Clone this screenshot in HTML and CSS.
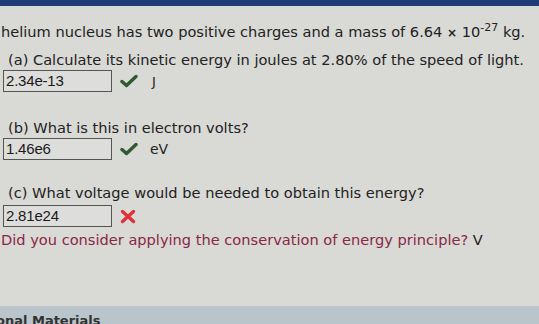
FILE: index.html
```html
<!DOCTYPE html>
<html>
<head>
<meta charset="utf-8">
<link rel="stylesheet" href="styles.css">
</head>
<body>
<div class="topbar"></div>
<div class="content">
  <p class="intro">helium nucleus has two positive charges and a mass of 6.64 <span class="times">×</span> 10<sup>-27</sup> kg.</p>
  <div class="part">
    <p class="q">(a) Calculate its kinetic energy in joules at 2.80% of the speed of light.</p>
    <div class="answer">
      <span class="box">2.34e-13</span>
      <svg class="mark" width="18" height="14" viewBox="0 0 18 14"><path d="M2 7.5 L6.5 11.5 L16 2.5" fill="none" stroke="#2f5a30" stroke-width="3.4" stroke-linecap="round" stroke-linejoin="round"/></svg>
      <span class="unit">J</span>
    </div>
  </div>
  <div class="part pb">
    <p class="q">(b) What is this in electron volts?</p>
    <div class="answer">
      <span class="box">1.46e6</span>
      <svg class="mark" width="18" height="14" viewBox="0 0 18 14"><path d="M2 7.5 L6.5 11.5 L16 2.5" fill="none" stroke="#2f5a30" stroke-width="3.4" stroke-linecap="round" stroke-linejoin="round"/></svg>
      <span class="unit ev">eV</span>
    </div>
  </div>
  <div class="part pc">
    <p class="q">(c) What voltage would be needed to obtain this energy?</p>
    <div class="answer ac">
      <span class="box">2.81e24</span>
      <svg class="mark x" width="16" height="15" viewBox="0 0 16 15"><path d="M2.5 2.5 L13.5 12.5 M13.5 2.5 L2.5 12.5" stroke="#e0303c" stroke-width="3.4" stroke-linecap="round"/></svg>
    </div>
    <p class="hint">Did you consider applying the conservation of energy principle? <span class="v">V</span></p>
  </div>
</div>
<div class="footer"><span>onal Materials</span></div>
</body>
</html>
```
FILE: styles.css
```css
html, body {
  margin: 0;
  padding: 0;
  width: 539px;
  height: 324px;
  overflow: hidden;
  background: #d9d9d6;
  font-family: "DejaVu Sans", Verdana, sans-serif;
  color: #222;
}
body {
  display: flex;
  flex-direction: column;
}
.topbar {
  height: 6px;
  background: #1f3c78;
}
.content {
  flex: 1;
  padding-left: 1px;
}
p { margin: 0; }
.intro {
  font-size: 14.6px;
  line-height: 18px;
  margin-top: 17px;
}
.times { font-size: 12px; font-weight: bold; }
sup { font-size: 11px; line-height: 0; vertical-align: 6px; }
.part { padding-left: 7px; margin-top: 9px; }
.pb { margin-top: 27px; }
.pc { margin-top: 24px; }
.q {
  font-size: 14.6px;
  line-height: 18px;
}
.answer {
  display: flex;
  align-items: center;
  margin-top: 1px;
  margin-left: -5px;
  height: 22px;
}
.ac { margin-top: 3px; }
.box {
  box-sizing: border-box;
  width: 109px;
  height: 22px;
  border: 1px solid #555;
  background: #dddddb;
  font-family: "Liberation Sans", Arial, sans-serif;
  font-size: 15px;
  line-height: 20px;
  padding-left: 2px;
  letter-spacing: -0.2px;
  color: #1a1a1a;
}
.mark { margin-left: 8px; }
.unit {
  margin-left: 14px;
  font-size: 13px;
}
.ev { margin-left: 12px; font-size: 14px; }
.hint {
  margin-left: -7px;
  margin-top: 4px;
  font-size: 14.6px;
  line-height: 18px;
  color: #8a2745;
}
.v { color: #222; }
.footer {
  height: 18px;
  background: #b9c5ca;
  overflow: hidden;
}
.footer span {
  display: block;
  margin-top: 8px;
  margin-left: -4px;
  font-family: "DejaVu Sans", sans-serif;
  font-weight: bold;
  font-size: 13px;
  line-height: 14px;
  color: #333;
}
```
